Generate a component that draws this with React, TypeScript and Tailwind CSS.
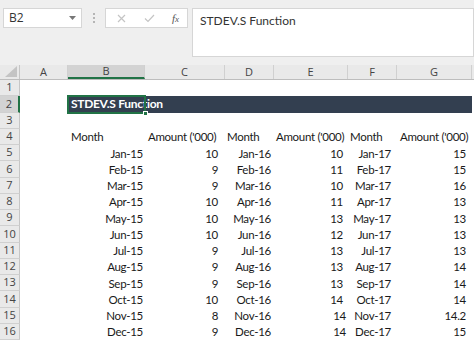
const cols = [
  { key: "A", w: "w-[48px]" },
  { key: "B", w: "w-[77px]" },
  { key: "C", w: "w-[80px]" },
  { key: "D", w: "w-[49px]" },
  { key: "E", w: "w-[74px]" },
  { key: "F", w: "w-[49px]" },
  { key: "G", w: "w-[75px]" },
];

const months = ["Jan", "Feb", "Mar", "Apr", "May", "Jun", "Jul", "Aug", "Sep", "Oct", "Nov", "Dec"];
const v15 = ["10", "9", "9", "10", "10", "10", "9", "9", "9", "10", "8", "9"];
const v16 = ["10", "11", "10", "11", "13", "12", "13", "13", "13", "14", "14", "14"];
const v17 = ["15", "15", "16", "13", "13", "13", "13", "14", "14", "14", "14.2", "15"];

const cellFont = "font-['Lato','Open_Sans',sans-serif] text-[11.5px] tracking-[-0.3px] text-[#1a1a1a]";

function RowHeader({ n }: { n: number }) {
  const selected = n === 2;
  return (
    <div
      className={
        "w-[20px] shrink-0 flex items-center justify-center border-b border-[#d0d0d0] text-[11px] text-[#444] font-['Open_Sans',sans-serif] " +
        (selected ? "bg-[#d3d3d3] border-r-2 border-r-[#217346]" : "bg-[#e9e9e9] border-r border-r-[#c6c6c6]")
      }
    >
      {n}
    </div>
  );
}

function DataRow({ i }: { i: number }) {
  const m = months[i];
  const late = i >= 10;
  return (
    <>
      <div className="w-[48px]" />
      <div className="w-[77px] text-right pr-[2px]">{m}-15</div>
      <div className="w-[80px] text-right pr-[7px]">{v15[i]}</div>
      <div className="w-[49px] text-right pr-[3px]">{m}-16</div>
      <div className={"w-[74px] text-right " + (late ? "pr-[2px]" : "pr-[5px]")}>{v16[i]}</div>
      <div className="w-[49px] text-right pr-[6px]">{m}-17</div>
      <div className="w-[75px] text-right pr-[6px]">{v17[i]}</div>
    </>
  );
}

export default function App() {
  const rows = Array.from({ length: 16 }, (_, i) => i + 1);
  return (
    <div className="w-[474px] h-[340px] overflow-hidden bg-[#efefef] flex flex-col">
      {/* formula bar */}
      <div className="h-[65px] shrink-0 flex items-start pt-[8px] pl-[3px]">
        <div className="w-[79px] h-[20px] bg-white border border-[#d6d6d6] flex items-center justify-between pl-[5px] pr-[5px] text-[12px] text-[#333] font-['Open_Sans',sans-serif]">
          <span>B2</span>
          <svg width="7" height="4" viewBox="0 0 7 4">
            <path d="M0 0h7L3.5 4z" fill="#777" />
          </svg>
        </div>
        <div className="w-[23px] h-[20px] flex flex-col items-center justify-center gap-[2px]">
          <span className="w-[2px] h-[2px] bg-[#b5b5b5]" />
          <span className="w-[2px] h-[2px] bg-[#b5b5b5]" />
          <span className="w-[2px] h-[2px] bg-[#b5b5b5]" />
        </div>
        <div className="w-[83px] h-[20px] bg-white border border-[#d6d6d6] flex items-center">
          <svg className="ml-[11px]" width="9" height="9" viewBox="0 0 9 9">
            <path d="M1 1l7 7M8 1L1 8" stroke="#c4c4c4" strokeWidth="1.2" />
          </svg>
          <svg className="ml-[18px]" width="11" height="9" viewBox="0 0 11 9">
            <path d="M1 4.5l3 3L10 1" stroke="#c4c4c4" strokeWidth="1.2" fill="none" />
          </svg>
          <span className="ml-[17px] text-[11px] italic text-[#555] font-['Liberation_Serif',serif]">
            f<span className="text-[9px]">x</span>
          </span>
        </div>
        <div className="ml-[4px] flex-1 h-[49px] bg-white border border-[#d6d6d6] pl-[7px] pt-[3px] text-[12px] text-[#333] font-['Lato',sans-serif]">
          STDEV.S Function
        </div>
      </div>

      {/* column headers */}
      <div className="h-[15px] shrink-0 flex border-b border-[#bdbdbd] bg-[#e9e9e9] text-[11px] text-[#444] font-['Open_Sans',sans-serif]">
        <div className="w-[20px] shrink-0 border-r border-[#c6c6c6] flex items-end justify-end pr-[2px] pb-[2px]">
          <svg width="12" height="11" viewBox="0 0 12 11">
            <path d="M12 0v11H0z" fill="#c4c4c4" />
          </svg>
        </div>
        {cols.map((c) => (
          <div
            key={c.key}
            className={
              c.w +
              " shrink-0 flex items-center justify-center border-r border-[#d0d0d0] " +
              (c.key === "B" ? "bg-[#d3d3d3] border-b-2 border-b-[#217346]" : "")
            }
          >
            {c.key}
          </div>
        ))}
        <div className="flex-1" />
      </div>

      {/* cells */}
      <div className="relative flex-1 bg-white">
        {rows.map((n) => (
          <div key={n} className="h-[16.25px] flex">
            <RowHeader n={n} />
            <div className={"flex-1 flex items-center whitespace-nowrap " + cellFont}>
              {n === 2 && (
                <>
                  <div className="w-[48px]" />
                  <div className="w-[404px] self-stretch bg-[#333f50] flex items-center pl-[3px] font-bold text-[12px] text-white">
                    STDEV.S Function
                  </div>
                </>
              )}
              {n === 4 && (
                <>
                  <div className="w-[48px]" />
                  <div className="w-[77px] pl-[3px]">Month</div>
                  <div className="w-[80px] pl-[3px]">Amount ('000)</div>
                  <div className="w-[49px] pl-[2px]">Month</div>
                  <div className="w-[74px] pl-[2px]">Amount ('000)</div>
                  <div className="w-[49px] pl-[2px]">Month</div>
                  <div className="w-[75px] pl-[3px]">Amount ('000)</div>
                </>
              )}
              {n >= 5 && <DataRow i={n - 5} />}
            </div>
          </div>
        ))}
        {/* active cell B2 */}
        <div className="absolute left-[67px] top-[15.25px] w-[79px] h-[18.25px] border-2 border-[#217346]">
          <div className="absolute -right-[4px] -bottom-[4px] w-[5px] h-[5px] bg-[#217346] border border-white" />
        </div>
      </div>
    </div>
  );
}
